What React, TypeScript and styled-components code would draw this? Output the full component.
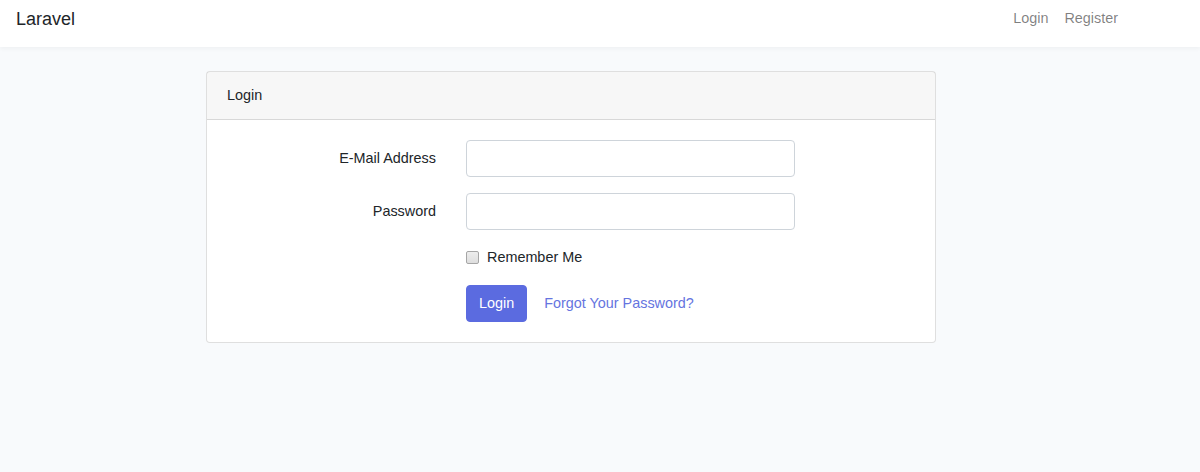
import React from 'react';
import styled, { createGlobalStyle } from 'styled-components';

const GlobalStyle = createGlobalStyle`
  * { box-sizing: border-box; }
  body {
    margin: 0;
    background-color: #f8fafc;
    color: #212529;
    font-family: "Liberation Sans", Arial, sans-serif;
    font-size: 14.4px;
    line-height: 1.6;
  }
`;

const Navbar = styled.nav`
  height: 47px;
  background: #fff;
  box-shadow: 0 2px 4px rgba(0, 0, 0, 0.04);
  display: flex;
  align-items: flex-start;
  justify-content: space-between;
  padding: 0 74px 0 16px;
  position: relative;
`;

const Brand = styled.a`
  font-size: 18px;
  line-height: 28.8px;
  padding-top: 5px;
  color: #212529;
  text-decoration: none;
`;

const NavLinks = styled.ul`
  list-style: none;
  margin: 0;
  padding: 7px 0 0;
  display: flex;
`;

const NavLink = styled.a`
  display: block;
  padding: 0 8px;
  color: rgba(0, 0, 0, 0.5);
  text-decoration: none;
`;

const Main = styled.main`
  padding: 24px 0 24px 206px;
`;

const Card = styled.div`
  width: 730px;
  background: #fff;
  border: 1px solid rgba(0, 0, 0, 0.125);
  border-radius: 4px;
`;

const CardHeader = styled.div`
  padding: 12px 20px;
  background: rgba(0, 0, 0, 0.03);
  border-bottom: 1px solid rgba(0, 0, 0, 0.125);
`;

const CardBody = styled.div`
  padding: 20px;
`;

const FormRow = styled.div<{ $last?: boolean }>`
  display: grid;
  grid-template-columns: 209px 329px;
  column-gap: 30px;
  margin-bottom: ${(p) => (p.$last ? '0' : '16px')};
`;

const Label = styled.label`
  text-align: right;
  padding-top: 7px;
`;

const Input = styled.input`
  display: block;
  width: 100%;
  height: 37px;
  padding: 6px 12px;
  font: inherit;
  color: #495057;
  background: #fff;
  border: 1px solid #ced4da;
  border-radius: 4px;
`;

const Check = styled.div`
  grid-column: 2;
  display: flex;
  align-items: center;
  height: 23px;
`;

const CheckBox = styled.input`
  appearance: none;
  width: 13px;
  height: 13px;
  margin: 0 8px 0 0;
  border: 1px solid #a6a6a6;
  border-radius: 2px;
  background: linear-gradient(#ededed, #dedede);
`;

const Actions = styled.div`
  grid-column: 2;
  display: flex;
  gap: 4px;
`;

const Button = styled.button<{ $link?: boolean }>`
  font: inherit;
  line-height: 1.6;
  padding: 6px 12px;
  border-radius: 4px;
  border: 1px solid ${(p) => (p.$link ? 'transparent' : '#5b6be0')};
  background: ${(p) => (p.$link ? 'transparent' : '#5b6be0')};
  color: ${(p) => (p.$link ? '#6574e0' : '#fff')};
  cursor: pointer;
`;

export default function App() {
  return (
    <>
      <GlobalStyle />
      <Navbar>
        <Brand href="#">Laravel</Brand>
        <NavLinks>
          <li><NavLink href="#">Login</NavLink></li>
          <li><NavLink href="#">Register</NavLink></li>
        </NavLinks>
      </Navbar>
      <Main>
        <Card>
          <CardHeader>Login</CardHeader>
          <CardBody>
            <FormRow>
              <Label htmlFor="email">E-Mail Address</Label>
              <Input id="email" type="email" />
            </FormRow>
            <FormRow>
              <Label htmlFor="password">Password</Label>
              <Input id="password" type="password" />
            </FormRow>
            <FormRow>
              <Check>
                <CheckBox type="checkbox" id="remember" />
                <label htmlFor="remember">Remember Me</label>
              </Check>
            </FormRow>
            <FormRow $last>
              <Actions>
                <Button type="submit">Login</Button>
                <Button $link type="button">Forgot Your Password?</Button>
              </Actions>
            </FormRow>
          </CardBody>
        </Card>
      </Main>
    </>
  );
}
